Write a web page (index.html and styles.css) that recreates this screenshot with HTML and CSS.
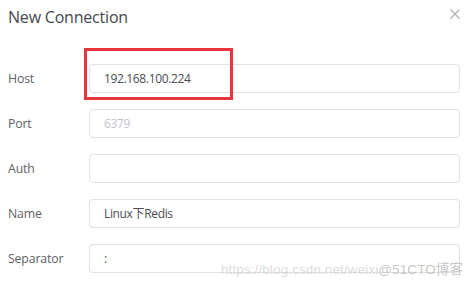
FILE: index.html
```html
<!DOCTYPE html>
<html>
<head>
<meta charset="utf-8">
<link rel="stylesheet" href="styles.css">
</head>
<body>
<div class="dialog">
  <div class="header">
    <span class="title">New Connection</span>
    <svg class="close" width="10" height="10" viewBox="0 0 10 10"><path d="M0.5 0.5L9.5 9.5M9.5 0.5L0.5 9.5" stroke="#a8abb2" stroke-width="1.1" fill="none"/></svg>
  </div>
  <div class="form">
    <div class="row"><label class="label">Host</label><div class="input">192.168.100.224</div></div>
    <div class="row"><label class="label">Port</label><div class="input placeholder">6379</div></div>
    <div class="row"><label class="label">Auth</label><div class="input"></div></div>
    <div class="row"><label class="label">Name</label><div class="input">Linux下Redis</div></div>
    <div class="row"><label class="label">Separator</label><div class="input">:</div></div>
  </div>
  <div class="highlight"></div>
  <div class="watermark">https://blog.csdn.net/weixi<span class="wm2">@51CTO博客</span></div>
</div>
</body>
</html>
```
FILE: styles.css
```css
html, body {
  margin: 0;
  padding: 0;
  background: #ffffff;
}
.dialog {
  position: relative;
  width: 474px;
  height: 284px;
  overflow: hidden;
  font-family: "Open Sans", "Noto Sans CJK SC", sans-serif;
}
.header {
  display: flex;
  justify-content: space-between;
  align-items: center;
  height: 24px;
  padding: 5px 14px 0 8px;
}
.title {
  font-size: 16px;
  letter-spacing: -0.2px;
  line-height: 24px;
  color: #45474c;
}
.close {
  display: block;
  margin-top: -7px;
}
.form {
  display: flex;
  flex-direction: column;
  gap: 16px;
  padding: 35px 0 0 8px;
}
.row {
  display: flex;
  align-items: center;
  height: 29px;
}
.label {
  width: 81px;
  font-size: 12.3px;
  letter-spacing: -0.15px;
  color: #606266;
}
.input {
  box-sizing: border-box;
  width: 371px;
  height: 29px;
  border: 1px solid #dfe1e6;
  border-radius: 4px;
  padding-left: 14px;
  font-size: 12px;
  letter-spacing: -0.35px;
  line-height: 27px;
  color: #4a4d52;
}
.placeholder {
  color: #c0c4cc;
}
.highlight {
  position: absolute;
  left: 84px;
  top: 48px;
  width: 143px;
  height: 46px;
  border: 3px solid #e8343d;
}
.watermark {
  position: absolute;
  left: 221px;
  top: 258px;
  font-family: "Liberation Sans", "Noto Sans CJK SC", sans-serif;
  font-size: 13.5px;
  color: rgba(205, 205, 205, 0.7);
  white-space: nowrap;
  letter-spacing: 0.1px;
}
.wm2 {
  color: rgba(180, 180, 180, 0.75);
}
```
